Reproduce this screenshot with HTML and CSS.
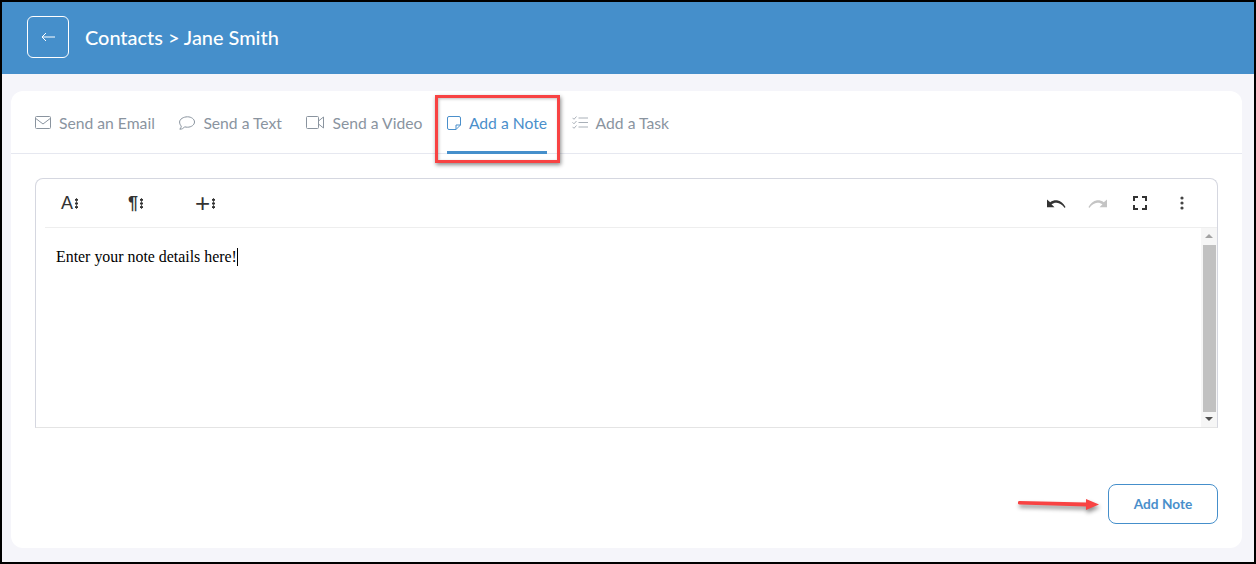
FILE: index.html
```html
<!DOCTYPE html>
<html lang="en">
<head>
<meta charset="utf-8">
<title>Contacts - Jane Smith</title>
<link rel="stylesheet" href="styles.css">
</head>
<body>
<div class="frame">
  <header class="topbar">
    <button class="back" aria-label="Back">
      <svg width="14" height="10" viewBox="0 0 14 10" fill="none" stroke="#fff" stroke-width="1"><path d="M14 5H1M5 1 1 5l4 4"/></svg>
    </button>
    <h1 class="title">Contacts &gt; Jane Smith</h1>
  </header>
  <main class="content">
    <section class="card">
      <nav class="tabs">
        <a class="tab">
          <svg class="ico" width="16" height="13" viewBox="0 0 16 13" fill="none" stroke="currentColor"><rect x=".5" y=".5" width="15" height="12" rx="1"/><path d="M.8 2.500 8 8l7.200-5.500"/></svg>
          <span>Send an Email</span>
        </a>
        <a class="tab">
          <svg class="ico" width="16" height="14" viewBox="0 0 16 14" fill="none" stroke="currentColor"><path d="M8.500.8c3.800 0 7 2.300 7 5.200s-3.200 5.200-7 5.200c-1 0-2-.1-2.900-.4C4.500 12.500 2.800 13.200.8 13.200c.8-.9 1.400-2 1.500-3.100C1.200 9 .6 7.600.6 6 .6 3.100 4.500.8 8.500.8Z"/></svg>
          <span>Send a Text</span>
        </a>
        <a class="tab">
          <svg class="ico" width="18" height="13" viewBox="0 0 18 13" fill="none" stroke="currentColor"><rect x=".5" y=".5" width="12" height="12" rx="1"/><path d="M12.500 5 17.500 1v11l-5-4"/></svg>
          <span>Send a Video</span>
        </a>
        <a class="tab active">
          <svg class="ico" width="14" height="14" viewBox="0 0 14 14" fill="none" stroke="currentColor"><path d="M9 13.500H2a1.500 1.500 0 0 1-1.500-1.500V2A1.500 1.500 0 0 1 2 .5h10A1.500 1.500 0 0 1 13.500 2v7L9 13.500V9h4.500"/></svg>
          <span>Add a Note</span>
        </a>
        <a class="tab">
          <svg class="ico faint" width="16" height="13" viewBox="0 0 16 13" fill="none" stroke="currentColor"><path d="M.5 1.800l1.500 1.500L4.500.5M.5 6.300l1.500 1.500L4.500 5M.5 10.800l1.500 1.500 2.500-2.800M6.500 2H16M6.500 6.500H16M6.500 11H16"/></svg>
          <span>Add a Task</span>
        </a>
      </nav>
      <div class="body">
        <div class="editor">
          <div class="toolbar">
            <div class="tools-left">
              <span class="tool-t"><span class="glyph">A</span><i class="dots"></i></span>
              <span class="tool-t"><span class="glyph para">¶</span><i class="dots"></i></span>
              <span class="tool-t"><span class="glyph plus">+</span><i class="dots"></i></span>
            </div>
            <div class="tools-right">
              <svg width="20" height="11" viewBox="0 0 20 11"><path fill="#333" d="M1 1.500v7.700h7.500L5.500 6.300C7.200 5 9 4.500 10.700 4.700c2.800.3 5.600 2 8 5.200l.8-.8C17.500 5.300 14.700 2.600 11 2.200 8.700 2 6.300 2.500 4.200 4.200Z"/></svg>
              <svg width="20" height="11" viewBox="0 0 20 11"><path fill="#c4c4c4" d="M19 1.500v7.700h-7.500l3-2.900C12.800 5 11 4.500 9.300 4.700c-2.800.3-5.600 2-8 5.200l-.8-.8C2.500 5.300 5.300 2.600 9 2.200c2.300-.2 4.700.3 6.800 2Z"/></svg>
              <svg class="full" width="14" height="14" viewBox="0 0 14 14" fill="none" stroke="#333" stroke-width="2"><path d="M1 5V1h4M9 1h4v4M13 9v4H9M5 13H1V9"/></svg>
              <svg width="4" height="14" viewBox="0 0 4 14" fill="#444"><circle cx="2" cy="2" r="1.600"/><circle cx="2" cy="7" r="1.600"/><circle cx="2" cy="12" r="1.600"/></svg>
            </div>
          </div>
          <div class="pane">
            <p class="note">Enter your note details here!<span class="caret"></span></p>
            <div class="scroll">
              <span class="arrow-up"></span>
              <span class="thumb"></span>
              <span class="arrow-down"></span>
            </div>
          </div>
        </div>
        <div class="actions">
          <button class="add">Add Note</button>
        </div>
      </div>
    </section>
  </main>
  <div class="callout"></div>
  <svg class="pointer" width="90" height="26" viewBox="0 0 90 26">
    <path fill="#f84343" d="M1.500 9 68 10.500V7l13 5.500L68 18v-3.500L1.500 12.500a1.750 1.750 0 0 1 0-3.500Z"/>
  </svg>
</div>
</body>
</html>
```
FILE: styles.css
```css
* { box-sizing: border-box; }
html, body { margin: 0; padding: 0; }
body { font-family: Lato, "Liberation Sans", sans-serif; background: #fff; }
.frame {
  position: relative;
  width: 1256px;
  height: 564px;
  border: 2px solid #000;
  display: flex;
  flex-direction: column;
  background: #f5f5fa;
  overflow: hidden;
}
.topbar {
  height: 72px;
  flex: none;
  background: #458fcb;
  display: flex;
  align-items: center;
  padding-left: 25px;
  padding-bottom: 3px;
  gap: 16px;
}
.back {
  width: 42px;
  height: 42px;
  border: 1px solid #fff;
  border-radius: 6px;
  background: transparent;
  padding: 0;
  display: flex;
  align-items: center;
  justify-content: center;
}
.title {
  margin: 0;
  color: #fff;
  font-size: 19.900px;
  font-weight: 500;
  line-height: 24px;
}
.content {
  flex: 1;
  padding: 17px 12px 14px 9px;
  min-height: 0;
}
.card {
  height: 100%;
  background: #fff;
  border-radius: 12px;
  display: flex;
  flex-direction: column;
}
.tabs {
  height: 63px;
  flex: none;
  border-bottom: 1px solid #e6e8f0;
  display: flex;
  padding-left: 24px;
  gap: 24.500px;
}
.tab {
  display: flex;
  align-items: center;
  gap: 8px;
  height: 63px;
  padding-top: 3px;
  color: #8a949f;
  font-size: 15.700px;
  border-bottom: 3px solid transparent;
}
.tab .ico { flex: none; }
.tab .faint { color: #a9b0b8; }
.tab.active { color: #4a8fcb; border-bottom-color: #458fcb; }
.body {
  flex: 1;
  padding: 24px;
  display: flex;
  flex-direction: column;
  min-height: 0;
}
.editor {
  height: 250px;
  flex: none;
  border: 1px solid #d5d7e0;
  border-bottom-color: #e4e4e4;
  border-radius: 8px 8px 0 0;
  display: flex;
  flex-direction: column;
}
.toolbar {
  height: 49px;
  flex: none;
  margin-left: 9px;
  border-bottom: 1px solid #eeeeee;
  display: flex;
  justify-content: space-between;
  align-items: center;
  padding: 0 33px 0 16px;
}
.tools-left { display: flex; gap: 49px; align-items: center; width: 154px; }
.tool-t { display: flex; align-items: center; gap: 2px; width: 18px; color: #333; }
.glyph { font-family: "Liberation Sans", sans-serif; font-size: 18px; line-height: 20px; }
.para { font-size: 18px; font-weight: 700; }
.plus { font-size: 26px; font-weight: 400; }
.dots {
  width: 3px;
  height: 11px;
  flex: none;
  background: radial-gradient(circle, #333 1.300px, transparent 1.600px) 0 0 / 3px 3.670px;
}
.tools-right { display: flex; align-items: center; gap: 22px; }
.tools-right .full { margin: 0 11px 0 3px; }
.pane { flex: 1; display: flex; min-height: 0; }
.note {
  flex: 1;
  margin: 0;
  padding: 19px 0 0 20px;
  font-family: "Liberation Serif", serif;
  font-size: 15.900px;
  line-height: 20px;
  color: #000;
}
.caret {
  display: inline-block;
  width: 1px;
  height: 18px;
  background: #000;
  vertical-align: -4px;
}
.scroll {
  width: 16px;
  flex: none;
  background: #f6f6f6;
  display: flex;
  flex-direction: column;
  align-items: center;
  padding-top: 6px;
  padding-bottom: 6px;
}
.arrow-up {
  width: 0; height: 0;
  border-left: 4px solid transparent;
  border-right: 4px solid transparent;
  border-bottom: 4px solid #a3a3a3;
}
.thumb { flex: 1; width: 13px; background: #c1c1c1; margin: 7px 0 5px; }
.arrow-down {
  width: 0; height: 0;
  border-left: 4px solid transparent;
  border-right: 4px solid transparent;
  border-top: 4px solid #505050;
}
.actions {
  margin-top: auto;
  display: flex;
  justify-content: flex-end;
}
.add {
  width: 110px;
  height: 40px;
  padding: 0 0 2px;
  background: #fff;
  border: 1px solid #458fcb;
  border-radius: 8px;
  color: #4a8fcb;
  font-family: Lato, sans-serif;
  font-size: 13.700px;
  font-weight: 700;
}
.callout {
  position: absolute;
  left: 433px;
  top: 93px;
  width: 125px;
  height: 68px;
  border: 3px solid #f84343;
  box-shadow: 1px 2px 4px rgba(0,0,0,.45), inset 1px 1px 3px rgba(0,0,0,.25);
}
.pointer {
  position: absolute;
  left: 1016px;
  top: 490px;
  filter: drop-shadow(1px 3px 2px rgba(0,0,0,.45));
}
```
